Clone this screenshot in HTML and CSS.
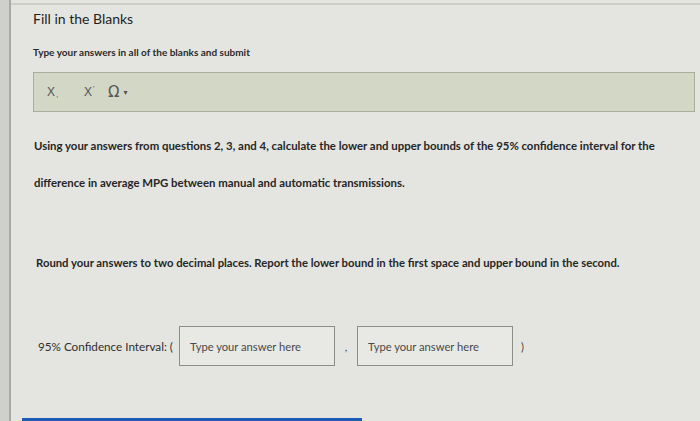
FILE: index.html
```html
<!DOCTYPE html>
<html>
<head>
<meta charset="utf-8">
<link rel="stylesheet" href="styles.css">
</head>
<body>
<div class="page">
  <div class="edge"></div>
  <main class="main">
    <h1 class="title">Fill in the Blanks</h1>
    <p class="instr">Type your answers in all of the blanks and submit</p>
    <div class="toolbar">
      <span class="tool sub-tool">X<span class="sub">,</span></span>
      <span class="tool sup-tool">X<span class="sup">'</span></span>
      <span class="tool omega">&Omega;<span class="caret">&#9662;</span></span>
    </div>
    <p class="question">Using your answers from questions 2, 3, and 4, calculate the lower and upper bounds of the 95% confidence interval for the difference in average MPG between manual and automatic transmissions.</p>
    <p class="round">Round your answers to two decimal places. Report the lower bound in the first space and upper bound in the second.</p>
    <div class="answer-row">
      <span class="label">95% Confidence Interval: (</span>
      <div class="blank">Type your answer here</div>
      <span class="sep">,</span>
      <div class="blank">Type your answer here</div>
      <span class="close">)</span>
    </div>
    <div class="bluebar"></div>
  </main>
</div>
</body>
</html>
```
FILE: styles.css
```css
html, body {
  margin: 0;
  padding: 0;
  height: 100%;
  background: #e4e5e0;
}
body {
  font-family: Lato, "Open Sans", sans-serif;
  color: #262626;
  overflow: hidden;
}
.page {
  display: flex;
  height: 421px;
  overflow: hidden;
}
.edge {
  width: 9px;
  flex: none;
  background: #cfd0cb;
  border-right: 2px solid #a9aaa5;
}
.main {
  flex: 1;
  padding: 8px 5px 0 22px;
  display: flex;
  flex-direction: column;
  background: linear-gradient(#e4e5e0 0 3px, #cdcfc9 3px 5px, #e4e5e0 5px) top / 100% 8px no-repeat, #e4e5e0;
}
.main > * {
  flex-shrink: 0;
}
.title {
  margin: 0;
  font-size: 14px;
  line-height: 20px;
  font-weight: 400;
  color: #1f1f1f;
  padding-top: 1px;
}
.instr {
  margin: 15px 0 0 0;
  font-size: 10px;
  line-height: 16px;
  font-weight: 700;
  color: #2a2a2a;
}
.toolbar {
  margin-top: 12px;
  height: 38px;
  background: #d2d7c6;
  border: 1px solid #a9ae9f;
  display: flex;
  align-items: center;
  padding-left: 13px;
}
.tool {
  font-size: 12px;
  color: #555;
  font-family: "Liberation Sans", sans-serif;
  display: inline-flex;
  align-items: center;
}
.sub-tool { width: 37px; }
.sup-tool { width: 24px; }
.sub {
  font-size: 8px;
  align-self: flex-end;
  margin-left: 1px;
  line-height: 8px;
}
.sup {
  font-size: 8px;
  align-self: flex-start;
  margin-left: 1px;
  line-height: 8px;
}
.omega {
  font-size: 15px;
  font-family: "DejaVu Sans", sans-serif;
}
.caret {
  font-size: 8px;
  margin-left: 4px;
}
.question {
  margin: 15px 0 0 1px;
  font-size: 11.4px;
  line-height: 37px;
  font-weight: 700;
  color: #262626;
}
.round {
  margin: 52px 0 0 3px;
  font-size: 11.3px;
  line-height: 20px;
  font-weight: 700;
  color: #262626;
}
.answer-row {
  margin-top: 53px;
  display: flex;
  align-items: center;
  height: 40px;
  padding-left: 5px;
}
.label {
  font-size: 11.7px;
  color: #2f2f2f;
  width: 141px;
}
.blank {
  box-sizing: border-box;
  width: 156px;
  height: 40px;
  border: 1px solid #8c8e8a;
  background: #e8e9e5;
  display: flex;
  align-items: center;
  padding-left: 10px;
  font-size: 11.2px;
  color: #4a4a4a;
}
.sep {
  width: 22px;
  text-align: center;
  font-size: 11px;
  color: #444;
}
.close {
  margin-left: 8px;
  font-size: 11px;
  color: #444;
}
.bluebar {
  margin-top: 52px;
  margin-left: -11px;
  height: 6px;
  width: 340px;
  background: #1f5bb3;
}
```
